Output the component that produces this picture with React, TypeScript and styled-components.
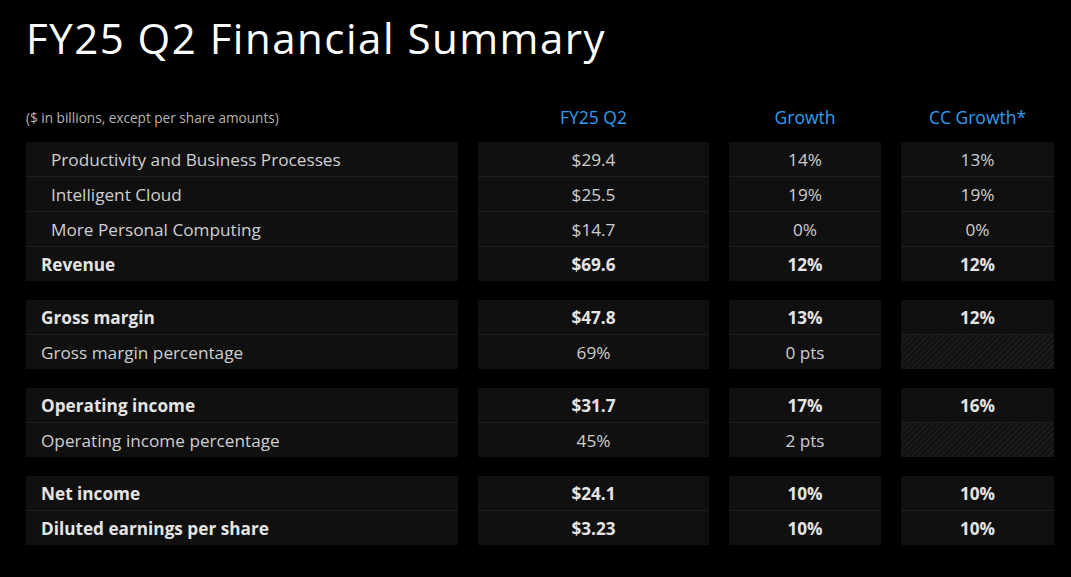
import styled, { createGlobalStyle } from "styled-components";

const GlobalStyle = createGlobalStyle`
  html, body {
    margin: 0;
    padding: 0;
    background: #000;
  }
  body {
    font-family: "Open Sans", "Noto Sans", sans-serif;
    color: #d6d6d6;
  }
`;

const Page = styled.div`
  width: 1071px;
  height: 577px;
  box-sizing: border-box;
  padding: 12px 0 0 26px;
  background: #000;
  overflow: hidden;
`;

const Title = styled.h1`
  margin: 0;
  font-size: 42px;
  font-weight: 400;
  line-height: 51px;
  color: #fff;
  letter-spacing: 1.5px;
`;

const Grid = styled.div`
  display: grid;
  grid-template-columns: 432px 231px 152px 153px;
  column-gap: 20px;
`;

const HeaderRow = styled(Grid)`
  margin-top: 41px;
  height: 26px;
  align-items: center;
`;

const Note = styled.div`
  font-size: 13.6px;
  color: #b4b4b4;
`;

const HeaderCell = styled.div`
  text-align: center;
  font-size: 17.5px;
  color: #2f9df0;
`;

const Table = styled.div`
  margin-top: 12px;
  display: flex;
  flex-direction: column;
  gap: 19px;
`;

const Block = styled.div`
  display: flex;
  flex-direction: column;
  background: #101010;
`;

const Cell = styled.div<{ $bold?: boolean; $indent?: boolean; $left?: boolean; $total?: boolean; $hatch?: boolean }>`
  height: 34px;
  display: flex;
  align-items: center;
  justify-content: ${(p) => (p.$left ? "flex-start" : "center")};
  padding-left: ${(p) => (p.$left ? (p.$indent ? "25px" : "15px") : "0")};
  font-size: 17.2px;
  font-weight: ${(p) => (p.$bold ? 700 : 400)};
  color: ${(p) => (p.$bold ? "#e4e4e4" : "#cfcfcf")};
  white-space: nowrap;
  background: ${(p) =>
    p.$hatch
      ? "repeating-linear-gradient(135deg, #121212 0 2.5px, #1c1c1c 2.5px 4px)"
      : "transparent"};

  & + & {
    border-top: 1px solid ${(p) => (p.$total ? "#a8a8a8" : "#1f1f1f")};
  }
`;

type Row = {
  label: string;
  values: [string, string, string | null];
  bold?: boolean;
  indent?: boolean;
  total?: boolean;
};

const groups: Row[][] = [
  [
    { label: "Productivity and Business Processes", values: ["$29.4", "14%", "13%"], indent: true },
    { label: "Intelligent Cloud", values: ["$25.5", "19%", "19%"], indent: true },
    { label: "More Personal Computing", values: ["$14.7", "0%", "0%"], indent: true },
    { label: "Revenue", values: ["$69.6", "12%", "12%"], bold: true, total: true },
  ],
  [
    { label: "Gross margin", values: ["$47.8", "13%", "12%"], bold: true },
    { label: "Gross margin percentage", values: ["69%", "0 pts", null] },
  ],
  [
    { label: "Operating income", values: ["$31.7", "17%", "16%"], bold: true },
    { label: "Operating income percentage", values: ["45%", "2 pts", null] },
  ],
  [
    { label: "Net income", values: ["$24.1", "10%", "10%"], bold: true },
    { label: "Diluted earnings per share", values: ["$3.23", "10%", "10%"], bold: true },
  ],
];

function Group({ rows }: { rows: Row[] }) {
  return (
    <Grid>
      <Block>
        {rows.map((r) => (
          <Cell key={r.label} $left $bold={r.bold} $indent={r.indent} $total={r.total}>
            {r.label}
          </Cell>
        ))}
      </Block>
      {[0, 1, 2].map((col) => (
        <Block key={col}>
          {rows.map((r) => (
            <Cell key={r.label} $bold={r.bold} $total={r.total} $hatch={r.values[col] === null}>
              {r.values[col]}
            </Cell>
          ))}
        </Block>
      ))}
    </Grid>
  );
}

export default function App() {
  return (
    <Page>
      <GlobalStyle />
      <Title>FY25 Q2 Financial Summary</Title>
      <HeaderRow>
        <Note>($ in billions, except per share amounts)</Note>
        <HeaderCell>FY25 Q2</HeaderCell>
        <HeaderCell>Growth</HeaderCell>
        <HeaderCell>CC Growth*</HeaderCell>
      </HeaderRow>
      <Table>
        {groups.map((g, i) => (
          <Group key={i} rows={g} />
        ))}
      </Table>
    </Page>
  );
}
